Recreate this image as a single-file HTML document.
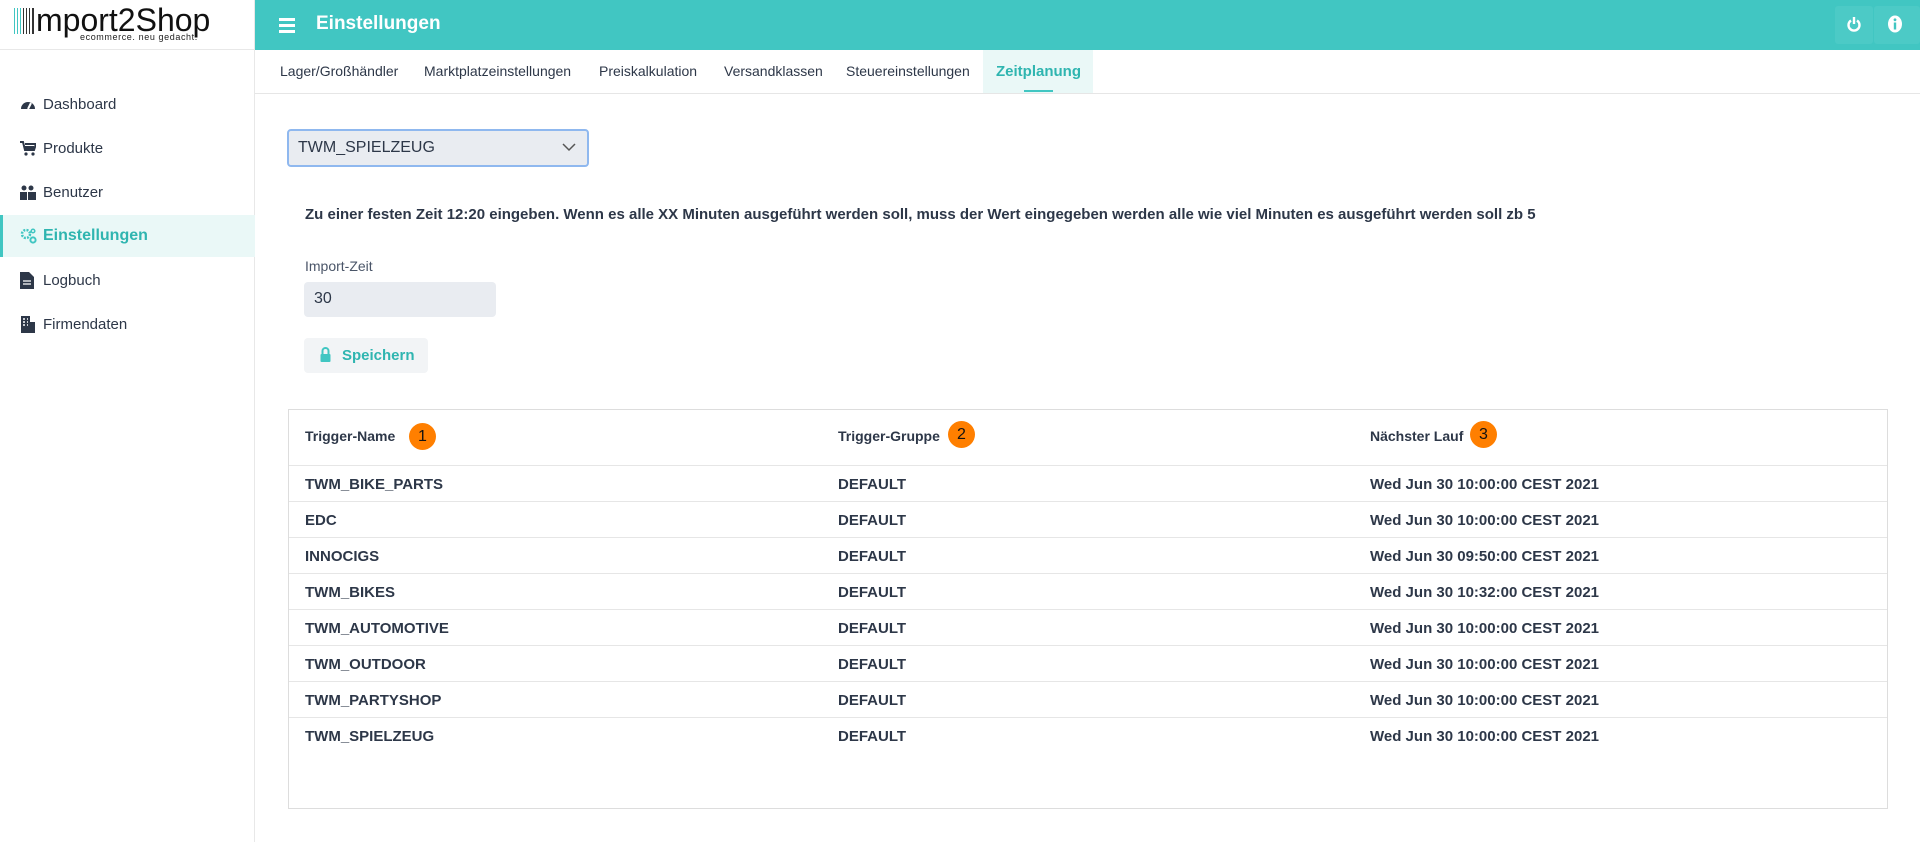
<!DOCTYPE html>
<html><head><meta charset="utf-8"><style>
*{box-sizing:border-box;margin:0;padding:0}
body{width:1920px;height:842px;overflow:hidden;background:#fff;font-family:"Liberation Sans",sans-serif;color:#2d3748;position:relative}
.a{position:absolute}
.top{left:255px;top:0;width:1665px;height:50px;background:#41c6c2}
.side{left:0;top:0;width:255px;height:842px;border-right:1px solid #e8e8e8}
.logoline{left:0;top:49px;width:255px;height:1px;background:#e8e8e8}
.nav{left:0;width:255px;height:42px;font-size:15px;display:flex;align-items:center;padding-left:43px}
.nav svg{position:absolute;left:20px}
.tab{top:63px;font-size:14px;color:#2d3748}
.row{left:289px;width:1598px;height:36px;border-top:1px solid #e6e6e6;font-size:15px;font-weight:bold}
.row span{position:absolute;top:10px}
.badge{width:27px;height:27px;border-radius:50%;background:#ff7f00;color:#111;font-size:16px;text-align:center;line-height:27px}
</style></head><body>
<div class="a side"></div>
<div class="a logoline"></div>
<div class="a" style="left:14px;top:4px;display:flex;align-items:flex-start">
<div style="display:flex;gap:2px;height:26px;margin-top:4px">
<div style="width:1px;background:#41c6c2"></div><div style="width:1px;background:#41c6c2"></div><div style="width:1px;background:#41c6c2"></div><div style="width:1px;background:#333"></div><div style="width:1px;background:#333"></div><div style="width:1px;background:#333"></div><div style="width:2px;background:#333"></div></div>
<div style="font-size:32px;font-weight:normal;color:#111;line-height:32px;letter-spacing:0px;margin-left:2px">mport2Shop</div>
</div>
<div class="a" style="left:80px;top:32px;font-size:9px;color:#222;letter-spacing:0.6px">ecommerce. neu gedacht.</div>

<div class="a nav" style="top:83px">
<svg width="16" height="14" viewBox="0 0 16 14"><path d="M1 12A7 7 0 0 1 15 12Z" fill="#2d3748"/><path d="M8 12L11 6" stroke="#fff" stroke-width="2"/></svg>Dashboard</div>
<div class="a nav" style="top:127px">
<svg width="16" height="15" viewBox="0 0 16 15"><path d="M0 1h3l2 8h9l2-6H5" fill="none" stroke="#2d3748" stroke-width="2"/><rect x="4" y="5" width="10" height="4" fill="#2d3748"/><circle cx="6" cy="13" r="1.6" fill="#2d3748"/><circle cx="13" cy="13" r="1.6" fill="#2d3748"/></svg>Produkte</div>
<div class="a nav" style="top:171px">
<svg width="16" height="15" viewBox="0 0 16 15"><circle cx="4" cy="3" r="2.5" fill="#2d3748"/><circle cx="11" cy="3" r="2.5" fill="#2d3748"/><rect x="0" y="7" width="7" height="8" fill="#2d3748"/><rect x="8" y="7" width="8" height="8" fill="#2d3748"/></svg>Benutzer</div>
<div class="a" style="left:0;top:215px;width:255px;height:42px;background:#eaf8f7"></div>
<div class="a" style="left:0;top:215px;width:3px;height:42px;background:#41c6c2"></div>
<div class="a nav" style="top:215px;color:#2fb5b0;font-weight:bold;font-size:16px">
<svg width="17" height="16" viewBox="0 0 17 16"><circle cx="6" cy="6" r="4" fill="none" stroke="#41c6c2" stroke-width="2.5" stroke-dasharray="2 1.2"/><circle cx="13" cy="12" r="2.6" fill="none" stroke="#41c6c2" stroke-width="2"/><circle cx="13" cy="3" r="1.8" fill="none" stroke="#41c6c2" stroke-width="1.5"/></svg>Einstellungen</div>
<div class="a nav" style="top:259px">
<svg width="14" height="17" viewBox="0 0 14 17"><path d="M0 0h9l5 5v12H0z" fill="#2d3748"/><path d="M3 9h8M3 12h8" stroke="#fff" stroke-width="1.3"/></svg>Logbuch</div>
<div class="a nav" style="top:303px">
<svg width="16" height="17" viewBox="0 0 16 17"><path d="M1 0h9v17H1z M10 6h5v11h-5z" fill="#2d3748"/><path d="M3 3h2M7 3h1M3 6h2M7 6h1M3 9h2M7 9h1" stroke="#fff" stroke-width="1.5"/></svg>Firmendaten</div>

<div class="a top"></div>
<div class="a" style="left:279px;top:18px;width:16px;height:3px;background:#fff;box-shadow:0 6px 0 #fff,0 12px 0 #fff"></div>
<div class="a" style="left:316px;top:13px;color:#fff;font-size:19px;font-weight:bold">Einstellungen</div>
<div class="a" style="left:1835px;top:6px;width:38px;height:38px;background:#4ccac6;border-radius:3px"></div>
<div class="a" style="left:1874px;top:6px;width:46px;height:38px;background:#4ccac6;border-radius:3px"></div>
<svg class="a" style="left:1846px;top:16px" width="16" height="17" viewBox="0 0 16 17"><path d="M5 4.5A5.5 5.5 0 1 0 11 4.5" fill="none" stroke="#fff" stroke-width="2.4"/><path d="M8 1v7" stroke="#fff" stroke-width="2.4"/></svg>
<svg class="a" style="left:1886px;top:15px" width="18" height="18" viewBox="0 0 18 18"><ellipse cx="9" cy="9" rx="7" ry="8.5" fill="#fff"/><rect x="7.8" y="7.5" width="2.4" height="7" fill="#41c6c2"/><circle cx="9" cy="4.8" r="1.4" fill="#41c6c2"/></svg>

<div class="a" style="left:255px;top:93px;width:1665px;height:1px;background:#e6e6e6"></div>
<div class="a" style="left:983px;top:50px;width:110px;height:43px;background:#eaf8f7"></div>
<div class="a" style="left:1024px;top:90px;width:29px;height:2px;background:#41c6c2"></div>
<div class="a tab" style="left:280px">Lager/Großhändler</div>
<div class="a tab" style="left:424px">Marktplatzeinstellungen</div>
<div class="a tab" style="left:599px">Preiskalkulation</div>
<div class="a tab" style="left:724px">Versandklassen</div>
<div class="a tab" style="left:846px">Steuereinstellungen</div>
<div class="a tab" style="left:996px;color:#2fb5b0;font-weight:bold;font-size:15px">Zeitplanung</div>

<div class="a" style="left:287px;top:129px;width:302px;height:38px;background:#e9ecf1;border:2px solid #8fb8ef;border-radius:4px"></div>
<div class="a" style="left:298px;top:139px;font-size:16px">TWM_SPIELZEUG</div>
<svg class="a" style="left:562px;top:143px" width="14" height="9" viewBox="0 0 14 9"><path d="M1 1l6 6 6-6" fill="none" stroke="#555" stroke-width="1.5"/></svg>

<div class="a" style="left:305px;top:206px;font-size:15px;font-weight:bold">Zu einer festen Zeit 12:20 eingeben. Wenn es alle XX Minuten ausgeführt werden soll, muss der Wert eingegeben werden alle wie viel Minuten es ausgeführt werden soll zb 5</div>
<div class="a" style="left:305px;top:258px;font-size:14px;color:#4a5568">Import-Zeit</div>
<div class="a" style="left:304px;top:282px;width:192px;height:35px;background:#e9ecf1;border-radius:4px"></div>
<div class="a" style="left:314px;top:290px;font-size:16px">30</div>
<div class="a" style="left:304px;top:338px;width:124px;height:35px;background:#f2f4f6;border-radius:4px"></div>
<svg class="a" style="left:320px;top:347px" width="11" height="15" viewBox="0 0 11 15"><path d="M2.5 7V4a3 3 0 0 1 6 0v3" fill="none" stroke="#41c6c2" stroke-width="2"/><rect x="0.5" y="7" width="10" height="8" rx="1" fill="#41c6c2"/></svg>
<div class="a" style="left:342px;top:347px;font-size:15px;color:#2fb5b0;font-weight:bold">Speichern</div>

<div class="a" style="left:288px;top:409px;width:1600px;height:400px;border:1px solid #ddd"></div>
<div class="a" style="left:305px;top:428px;font-size:14px;font-weight:bold">Trigger-Name</div>
<div class="a badge" style="left:409px;top:423px">1</div>
<div class="a" style="left:838px;top:428px;font-size:14px;font-weight:bold">Trigger-Gruppe</div>
<div class="a badge" style="left:948px;top:421px">2</div>
<div class="a" style="left:1370px;top:428px;font-size:14px;font-weight:bold">Nächster Lauf</div>
<div class="a badge" style="left:1470px;top:421px">3</div>

<div class="a row" style="top:465px"><span style="left:16px">TWM_BIKE_PARTS</span><span style="left:549px">DEFAULT</span><span style="left:1081px">Wed Jun 30 10:00:00 CEST 2021</span></div>
<div class="a row" style="top:501px"><span style="left:16px">EDC</span><span style="left:549px">DEFAULT</span><span style="left:1081px">Wed Jun 30 10:00:00 CEST 2021</span></div>
<div class="a row" style="top:537px"><span style="left:16px">INNOCIGS</span><span style="left:549px">DEFAULT</span><span style="left:1081px">Wed Jun 30 09:50:00 CEST 2021</span></div>
<div class="a row" style="top:573px"><span style="left:16px">TWM_BIKES</span><span style="left:549px">DEFAULT</span><span style="left:1081px">Wed Jun 30 10:32:00 CEST 2021</span></div>
<div class="a row" style="top:609px"><span style="left:16px">TWM_AUTOMOTIVE</span><span style="left:549px">DEFAULT</span><span style="left:1081px">Wed Jun 30 10:00:00 CEST 2021</span></div>
<div class="a row" style="top:645px"><span style="left:16px">TWM_OUTDOOR</span><span style="left:549px">DEFAULT</span><span style="left:1081px">Wed Jun 30 10:00:00 CEST 2021</span></div>
<div class="a row" style="top:681px"><span style="left:16px">TWM_PARTYSHOP</span><span style="left:549px">DEFAULT</span><span style="left:1081px">Wed Jun 30 10:00:00 CEST 2021</span></div>
<div class="a row" style="top:717px"><span style="left:16px">TWM_SPIELZEUG</span><span style="left:549px">DEFAULT</span><span style="left:1081px">Wed Jun 30 10:00:00 CEST 2021</span></div>
</body></html>
